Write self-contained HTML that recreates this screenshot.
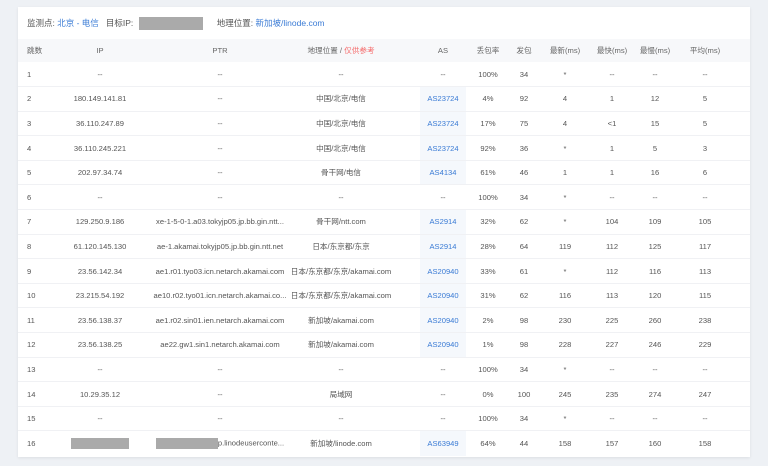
<!DOCTYPE html>
<html><head><meta charset="utf-8"><style>
*{margin:0;padding:0;box-sizing:border-box}
body{width:768px;height:466px;background:#eef1f5;font-family:"Liberation Sans","Noto Sans CJK SC",sans-serif;font-size:7.6px;color:#555;position:relative;overflow:hidden}
.card{position:absolute;left:18px;top:7px;width:732px;height:450px;background:#fff;box-shadow:0 1px 3px rgba(0,0,0,.08)}
.top{position:absolute;left:9px;top:10px;font-size:8.5px;color:#555;white-space:nowrap}
.top .b{color:#3a7bd5}
.gray{display:inline-block;background:#aaa;vertical-align:middle}
table{position:absolute;left:0;top:32px;border-collapse:collapse;table-layout:fixed;width:732px}
td,th{height:24.6px;text-align:center;font-weight:normal;white-space:nowrap;overflow:visible;border-bottom:1px solid #f0f1f4;padding:0}
th{height:23px;background:#f7f8fa;color:#666;border-bottom:none}
td:first-child,th:first-child{text-align:left;padding-left:9px}
.as{color:#3a7bd5;background:#f5f8fc}
.r{color:#f56c6c}
</style></head><body>
<div class="card">
<div class="top">监测点: <span class="b">北京 - 电信</span>&nbsp;&nbsp;&nbsp;目标IP: <span class="gray" style="width:64px;height:13px;margin-left:3px"></span>&nbsp;&nbsp;&nbsp;&nbsp;&nbsp;&nbsp;地理位置: <span class="b">新加坡/linode.com</span></div>
<table>
<colgroup><col style="width:32px"><col style="width:100px"><col style="width:140px"><col style="width:102px"><col style="width:28px"><col style="width:46px"><col style="width:44px"><col style="width:28px"><col style="width:54px"><col style="width:40px"><col style="width:46px"><col style="width:54px"><col style="width:18px"></colgroup>
<tr><th>跳数</th><th>IP</th><th>PTR</th><th>地理位置 / <span class="r">仅供参考</span></th><th></th><th>AS</th><th>丢包率</th><th>发包</th><th>最新(ms)</th><th>最快(ms)</th><th>最慢(ms)</th><th>平均(ms)</th><th></th></tr>
<tr><td>1</td><td>--</td><td>--</td><td>--</td><td></td><td>--</td><td>100%</td><td>34</td><td>*</td><td>--</td><td>--</td><td>--</td><td></td></tr>
<tr><td>2</td><td>180.149.141.81</td><td>--</td><td>中国/北京/电信</td><td></td><td class="as">AS23724</td><td>4%</td><td>92</td><td>4</td><td>1</td><td>12</td><td>5</td><td></td></tr>
<tr><td>3</td><td>36.110.247.89</td><td>--</td><td>中国/北京/电信</td><td></td><td class="as">AS23724</td><td>17%</td><td>75</td><td>4</td><td>&lt;1</td><td>15</td><td>5</td><td></td></tr>
<tr><td>4</td><td>36.110.245.221</td><td>--</td><td>中国/北京/电信</td><td></td><td class="as">AS23724</td><td>92%</td><td>36</td><td>*</td><td>1</td><td>5</td><td>3</td><td></td></tr>
<tr><td>5</td><td>202.97.34.74</td><td>--</td><td>骨干网/电信</td><td></td><td class="as">AS4134</td><td>61%</td><td>46</td><td>1</td><td>1</td><td>16</td><td>6</td><td></td></tr>
<tr><td>6</td><td>--</td><td>--</td><td>--</td><td></td><td>--</td><td>100%</td><td>34</td><td>*</td><td>--</td><td>--</td><td>--</td><td></td></tr>
<tr><td>7</td><td>129.250.9.186</td><td>xe-1-5-0-1.a03.tokyjp05.jp.bb.gin.ntt...</td><td>骨干网/ntt.com</td><td></td><td class="as">AS2914</td><td>32%</td><td>62</td><td>*</td><td>104</td><td>109</td><td>105</td><td></td></tr>
<tr><td>8</td><td>61.120.145.130</td><td>ae-1.akamai.tokyjp05.jp.bb.gin.ntt.net</td><td>日本/东京都/东京</td><td></td><td class="as">AS2914</td><td>28%</td><td>64</td><td>119</td><td>112</td><td>125</td><td>117</td><td></td></tr>
<tr><td>9</td><td>23.56.142.34</td><td>ae1.r01.tyo03.icn.netarch.akamai.com</td><td>日本/东京都/东京/akamai.com</td><td></td><td class="as">AS20940</td><td>33%</td><td>61</td><td>*</td><td>112</td><td>116</td><td>113</td><td></td></tr>
<tr><td>10</td><td>23.215.54.192</td><td>ae10.r02.tyo01.icn.netarch.akamai.co...</td><td>日本/东京都/东京/akamai.com</td><td></td><td class="as">AS20940</td><td>31%</td><td>62</td><td>116</td><td>113</td><td>120</td><td>115</td><td></td></tr>
<tr><td>11</td><td>23.56.138.37</td><td>ae1.r02.sin01.ien.netarch.akamai.com</td><td>新加坡/akamai.com</td><td></td><td class="as">AS20940</td><td>2%</td><td>98</td><td>230</td><td>225</td><td>260</td><td>238</td><td></td></tr>
<tr><td>12</td><td>23.56.138.25</td><td>ae22.gw1.sin1.netarch.akamai.com</td><td>新加坡/akamai.com</td><td></td><td class="as">AS20940</td><td>1%</td><td>98</td><td>228</td><td>227</td><td>246</td><td>229</td><td></td></tr>
<tr><td>13</td><td>--</td><td>--</td><td>--</td><td></td><td>--</td><td>100%</td><td>34</td><td>*</td><td>--</td><td>--</td><td>--</td><td></td></tr>
<tr><td>14</td><td>10.29.35.12</td><td>--</td><td>局域网</td><td></td><td>--</td><td>0%</td><td>100</td><td>245</td><td>235</td><td>274</td><td>247</td><td></td></tr>
<tr><td>15</td><td>--</td><td>--</td><td>--</td><td></td><td>--</td><td>100%</td><td>34</td><td>*</td><td>--</td><td>--</td><td>--</td><td></td></tr>
<tr><td style="border:none">16</td><td style="border:none"><span class="gray" style="width:58px;height:11px"></span></td><td style="border:none"><span class="gray" style="width:62px;height:11px"></span>p.linodeuserconte...</td><td style="border:none">新加坡/linode.com</td><td style="border:none"></td><td class="as" style="border:none">AS63949</td><td style="border:none">64%</td><td style="border:none">44</td><td style="border:none">158</td><td style="border:none">157</td><td style="border:none">160</td><td style="border:none">158</td><td style="border:none"></td></tr>
</table>
</div>
</body></html>
